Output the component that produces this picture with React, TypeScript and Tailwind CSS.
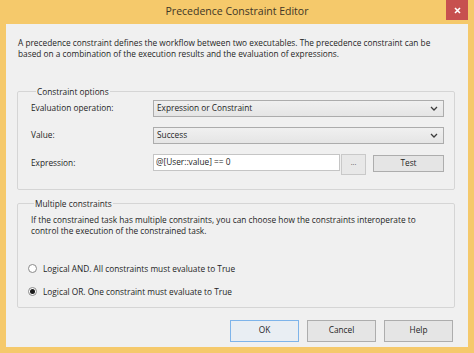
import React from "react";

function Chevron() {
  return (
    <svg width="8" height="5" viewBox="0 0 8 5" className="shrink-0">
      <path d="M1 1 L4 4 L7 1" fill="none" stroke="#3c3c3c" strokeWidth="1.3" />
    </svg>
  );
}

function Select({ value }: { value: string }) {
  return (
    <div className="flex h-[17px] items-center justify-between border border-[#acacac] bg-[linear-gradient(#f0f0f0,#e5e5e5)] pl-[3px] pr-[5px]">
      <span>{value}</span>
      <Chevron />
    </div>
  );
}

function WinButton({ label, focused }: { label: string; focused?: boolean }) {
  return (
    <button
      className={`flex h-[22px] w-[69px] items-center justify-center border ${
        focused ? "border-[#7eb4ea] bg-[#e9eef3]" : "border-[#adadad] bg-[#e5e5e5]"
      }`}
    >
      {label}
    </button>
  );
}

function Radio({ checked, label }: { checked?: boolean; label: string }) {
  return (
    <div className="flex items-center gap-[6px] leading-[11px]">
      <span className="flex h-[9px] w-[9px] items-center justify-center rounded-full border border-[#8a8a8a] bg-white">
        {checked && <span className="h-[5px] w-[5px] rounded-full bg-[#1a1a1a]" />}
      </span>
      <span>{label}</span>
    </div>
  );
}

export default function App() {
  return (
    <div className="flex h-[353px] w-[474px] flex-col bg-[#f5c96b] px-[6px] pb-[6px] font-['Open_Sans',sans-serif] text-[8.3px] text-[#1e1e1e]">
      {/* title bar */}
      <div className="relative flex h-[24px] items-center justify-center">
        <span className="pb-[1px] text-[10.5px] text-[#3d3526]">Precedence Constraint Editor</span>
        <div className="absolute right-0 top-0 flex h-[20px] w-[22px] items-center justify-center bg-[#c7504f]">
          <svg width="7" height="7" viewBox="0 0 7 7">
            <path d="M1 1 L6 6 M6 1 L1 6" stroke="white" strokeWidth="1.6" />
          </svg>
        </div>
      </div>

      {/* body */}
      <div className="flex flex-1 flex-col bg-[#f0f0f0] pl-[11px] pr-[13px] pt-[13px]">
        <p className="whitespace-nowrap pl-[1px] leading-[11px]">
          A precedence constraint defines the workflow between two executables. The precedence constraint can be
          <br />
          based on a combination of the execution results and the evaluation of expressions.
        </p>

        <fieldset className="mt-[27px] rounded-[2px] border border-[#d5d5d5] pb-[14px] pl-[13px] pr-[10px]">
          <legend className="ml-[5px] px-[1px] leading-[11px]">Constraint options</legend>
          <div className="grid grid-cols-[122px_1fr] items-center gap-y-[10px] pt-[3px]">
            <span>Evaluation operation:</span>
            <Select value="Expression or Constraint" />
            <span>Value:</span>
            <Select value="Success" />
            <span className="self-start pt-[3px]">Expression:</span>
            <div className="flex items-start">
              <div className="flex h-[17px] w-[187px] items-center border border-[#c5c5c5] bg-white pl-[2px]">
                @[User::value] == 0
              </div>
              <div className="-mt-[0.5px] ml-[1px] flex h-[21px] w-[25px] items-end justify-center border border-[#c9c9c9] bg-[#e8e8e8] pb-[5px] text-[7px] text-[#555]">
                ...
              </div>
              <div className="ml-[7px] mt-[1px] flex h-[17px] w-[71px] items-center justify-center border border-[#adadad] bg-[#e5e5e5]">
                Test
              </div>
            </div>
          </div>
        </fieldset>

        <fieldset className="mt-[8px] rounded-[2px] border border-[#d5d5d5] pb-[10px] pl-[10px] pr-[10px]">
          <legend className="ml-[6px] px-[1px] leading-[11px]">Multiple constraints</legend>
          <p className="whitespace-nowrap pl-[3px] pt-[5px] leading-[11px]">
            If the constrained task has multiple constraints, you can choose how the constraints interoperate to
            <br />
            control the execution of the constrained task.
          </p>
          <div className="mt-[27px] flex flex-col gap-[12px]">
            <Radio label="Logical AND. All constraints must evaluate to True" />
            <Radio checked label="Logical OR. One constraint must evaluate to True" />
          </div>
        </fieldset>

        <div className="mt-[12px] flex justify-end gap-[8px] pr-[2px]">
          <WinButton label="OK" focused />
          <WinButton label="Cancel" />
          <WinButton label="Help" />
        </div>
      </div>
    </div>
  );
}
